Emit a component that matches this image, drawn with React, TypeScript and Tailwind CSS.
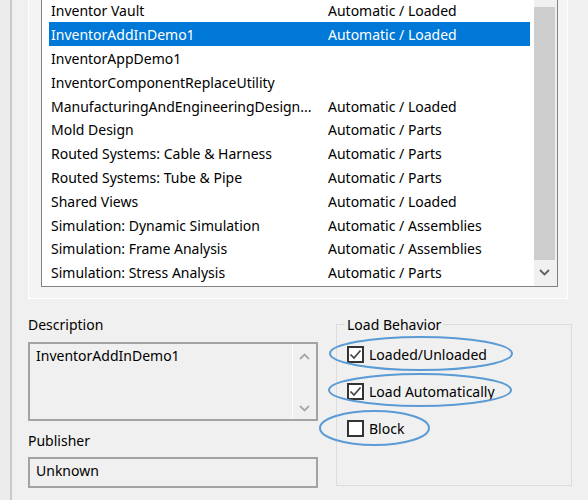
import React from "react";

const rows: [string, string][] = [
  ["Inventor Vault", "Automatic / Loaded"],
  ["InventorAddInDemo1", "Automatic / Loaded"],
  ["InventorAppDemo1", ""],
  ["InventorComponentReplaceUtility", ""],
  ["ManufacturingAndEngineeringDesign...", "Automatic / Loaded"],
  ["Mold Design", "Automatic / Parts"],
  ["Routed Systems: Cable & Harness", "Automatic / Parts"],
  ["Routed Systems: Tube & Pipe", "Automatic / Parts"],
  ["Shared Views", "Automatic / Loaded"],
  ["Simulation: Dynamic Simulation", "Automatic / Assemblies"],
  ["Simulation: Frame Analysis", "Automatic / Assemblies"],
  ["Simulation: Stress Analysis", "Automatic / Parts"],
];

function Chevron({ up, color }: { up?: boolean; color: string }) {
  return (
    <svg width="11" height="7" viewBox="0 0 11 7">
      <path
        d={up ? "M1 6 L5.5 1.5 L10 6" : "M1 1 L5.5 5.5 L10 1"}
        fill="none"
        stroke={color}
        strokeWidth="1.8"
      />
    </svg>
  );
}

function CheckBox({ checked, label }: { checked: boolean; label: string }) {
  return (
    <div className="flex h-[20px] items-center">
      <div className="flex h-[17px] w-[17px] items-center justify-center border-2 border-[#333333] bg-white">
        {checked && (
          <svg width="13" height="13" viewBox="0 0 13 13">
            <path d="M1.5 6.5 L5 10 L11.5 2.5" fill="none" stroke="#444444" strokeWidth="1.7" />
          </svg>
        )}
      </div>
      <span className="ml-[5px]">{label}</span>
    </div>
  );
}

export default function App() {
  return (
    <div className="relative flex h-[500px] w-[588px] overflow-hidden bg-[#f0f0f0] font-['Noto_Sans',sans-serif] text-[14px] leading-[20px] text-black">
      <div className="w-[12px] shrink-0 border-r-2 border-[#c9c9c9] bg-[#ececec]" />

      <div className="flex flex-col pl-[16px]">
        {/* add-in list */}
        <div className="-mt-[14px] w-[540px] border border-white bg-[#f4f4f4] pb-[11px] pl-[12px] pr-[9px] pt-[10px]">
          <div className="flex border border-[#828282] bg-white">
            <div className="flex-1 pb-[2px] pl-[7px] pr-[4px]">
              {rows.map(([name, status], i) => {
                const sel = i === 1;
                return (
                  <div
                    key={name}
                    className={`flex h-[23.8px] items-center pl-[2px] pt-[3px] ${sel ? "bg-[#0078d7] text-white" : ""}`}
                  >
                    <span className="w-[277px] shrink-0 overflow-hidden whitespace-nowrap">{name}</span>
                    <span className="whitespace-nowrap">{status}</span>
                  </div>
                );
              })}
            </div>
            <div className="flex w-[23px] flex-col bg-[#f0f0f0]">
              <div className="h-[9px]" />
              <div className="mr-[2px] h-[253px] bg-[#cdcdcd]" />
              <div className="flex flex-1 items-center justify-center pr-[2px]">
                <Chevron color="#606060" />
              </div>
            </div>
          </div>
        </div>

        {/* details */}
        <div className="mt-[16px] flex">
          <div className="flex w-[290px] flex-col">
            <span>Description</span>
            <div className="mt-[7px] flex h-[79px] border-2 border-[#a3a3a3]">
              <div className="flex-1 pl-[6px] pt-[2px]">InventorAddInDemo1</div>
              <div className="flex w-[24px] flex-col items-center justify-between border-l border-white pb-[7px] pt-[9px]">
                <Chevron up color="#a8a8a8" />
                <Chevron color="#a8a8a8" />
              </div>
            </div>
            <span className="mt-[10px]">Publisher</span>
            <div className="mt-[6px] flex h-[31px] items-center border-2 border-[#a3a3a3] pb-[2px] pl-[6px]">
              Unknown
            </div>
            <span className="mt-[9px]">File Location</span>
          </div>

          <fieldset className="ml-[18px] h-[171px] w-[236px] border border-[#dcdcdc]">
            <legend className="ml-[8px] px-[2px]">Load Behavior</legend>
            <div className="mt-[10px] flex flex-col gap-[17px] pl-[10px]">
              <CheckBox checked label="Loaded/Unloaded" />
              <CheckBox checked label="Load Automatically" />
              <CheckBox checked={false} label="Block" />
            </div>
          </fieldset>
        </div>
      </div>

      {/* annotation marks */}
      <svg className="pointer-events-none absolute inset-0" width="588" height="500">
        <g fill="none" stroke="#5b9bd5" strokeWidth="2">
          <ellipse cx="421" cy="353.5" rx="91" ry="16.5" />
          <ellipse cx="420" cy="390" rx="91" ry="16" />
          <ellipse cx="374.5" cy="428" rx="54.5" ry="17" />
        </g>
      </svg>
    </div>
  );
}
